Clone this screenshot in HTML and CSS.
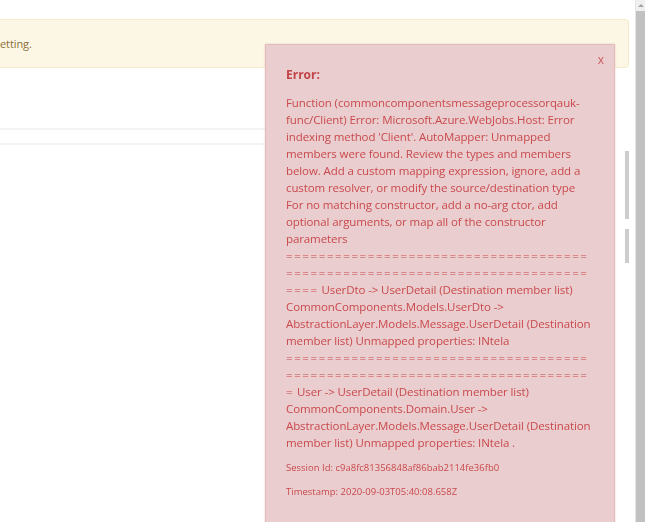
FILE: index.html
```html
<!DOCTYPE html>
<html>
<head>
    <title>Function App</title>
    <link rel="stylesheet" href="styles.css">
</head>
<body>
    <div class="layout">
        <div class="main">
            <div class="alert-warning">etting.</div>
            <div class="table-head"></div>
            <div class="table-body">
                <div class="rows"></div>
                <div class="mini-scroll">
                    <div class="mini-thumb tall"></div>
                    <div class="mini-thumb short"></div>
                </div>
            </div>
        </div>
        <div class="scrollbar">
            <div class="scroll-arrow"></div>
            <div class="scroll-thumb"></div>
        </div>
    </div>

    <div class="error-panel">
        <span class="close">x</span>
        <h4 class="error-title">Error:</h4>
        <p class="error-message">Function (commoncomponentsmessageprocessorqauk-func/Client) Error: Microsoft.Azure.WebJobs.Host: Error indexing method 'Client'. AutoMapper: Unmapped members were found. Review the types and members below. Add a custom mapping expression, ignore, add a custom resolver, or modify the source/destination type For no matching constructor, add a no-arg ctor, add optional arguments, or map all of the constructor parameters <span class="rule">==============================================================================</span> UserDto -&gt; UserDetail (Destination member list) CommonComponents.Models.UserDto -&gt; AbstractionLayer.Models.Message.UserDetail (Destination member list) Unmapped properties: INtela <span class="rule">===========================================================================</span> User -&gt; UserDetail (Destination member list) CommonComponents.Domain.User -&gt; AbstractionLayer.Models.Message.UserDetail (Destination member list) Unmapped properties: INtela .</p>
        <p class="error-meta">Session Id: c9a8fc81356848af86bab2114fe36fb0</p>
        <p class="error-meta">Timestamp: 2020-09-03T05:40:08.658Z</p>
    </div>
</body>
</html>
```

FILE: styles.css
```css
html, body {
    margin: 0;
    height: 100%;
    overflow: hidden;
}

body {
    font-family: "Open Sans", "Noto Sans", sans-serif;
    font-size: 11.5px;
    background-color: #fff;
}

.layout {
    display: flex;
    height: 100%;
}

.main {
    flex: 1;
    padding-right: 6px;
}

.alert-warning {
    margin-top: 19px;
    height: 47px;
    line-height: 47px;
    background-color: #fcf7e4;
    border: 1px solid #f5ebcb;
    border-left: none;
    border-radius: 0 4px 4px 0;
    color: #8a6d3b;
    font-size: 11px;
    letter-spacing: -0.1px;
}

.table-head {
    margin-top: 60px;
    margin-right: 20px;
    height: 13px;
    border-top: 2px solid #f3f3f3;
    border-bottom: 2px solid #f3f3f3;
}

.table-body {
    display: flex;
    justify-content: flex-end;
}

.mini-scroll {
    margin-top: 6px;
    width: 4px;
    display: flex;
    flex-direction: column;
    gap: 10px;
}

.mini-thumb {
    background-color: #cdcdcd;
}

.mini-thumb.tall {
    height: 68px;
}

.mini-thumb.short {
    height: 34px;
}

.scrollbar {
    width: 9px;
    background-color: #f0f0f0;
    border-left: 1px solid #e6e6e6;
    display: flex;
    flex-direction: column;
}

.scroll-arrow {
    height: 11px;
    background-color: #f0f0f0;
    position: relative;
}

.scroll-arrow::after {
    content: "";
    position: absolute;
    left: 2px;
    top: 4px;
    border-left: 3px solid transparent;
    border-right: 3px solid transparent;
    border-bottom: 3px solid #a3a3a3;
}

.scroll-thumb {
    flex: 1;
    background-color: #c1c1c1;
}

.error-panel {
    position: fixed;
    top: 44px;
    left: 265px;
    width: 308px;
    height: 520px;
    padding: 0 20px;
    background-color: #eacdce;
    border: 1px solid #e4babc;
    color: #c9494d;
    box-shadow: 0 0 2px rgba(180, 120, 120, 0.3);
}

.close {
    position: absolute;
    top: 6px;
    right: 10px;
    font-size: 12px;
    color: #cc5b5e;
}

.error-title {
    margin: 21px 0 11px;
    font-size: 12px;
    font-weight: bold;
    color: #c24348;
}

.error-message {
    margin: 0;
    line-height: 17px;
    letter-spacing: -0.1px;
    overflow-wrap: anywhere;
}

.rule {
    letter-spacing: 1.6px;
}

.error-meta {
    margin: 10px 0 0;
    line-height: 14px;
    font-size: 9.5px;
}
```
